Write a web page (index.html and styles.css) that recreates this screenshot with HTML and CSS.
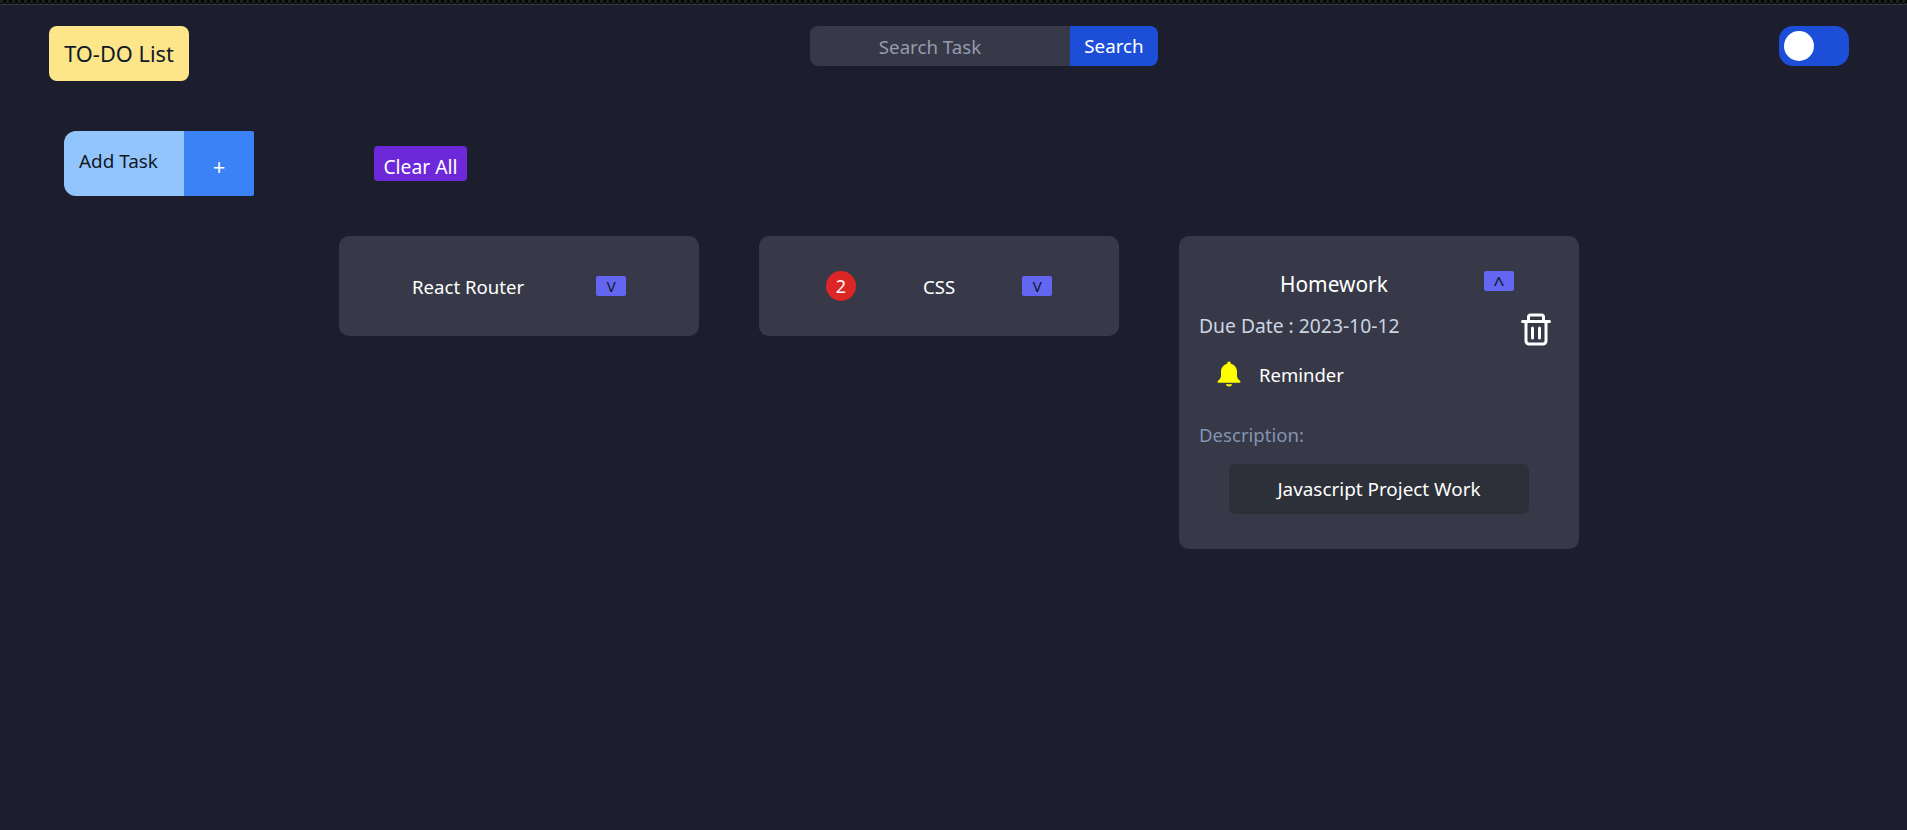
FILE: index.html
```html
<!DOCTYPE html>
<html lang="en">
<head>
    <meta charset="UTF-8">
    <title>TO-DO List</title>
    <link rel="stylesheet" href="styles.css">
</head>
<body>
    <div class="top-strip"></div>

    <header class="navbar">
        <div class="brand">TO-DO List</div>
        <form class="search">
            <input class="search-input" type="text" placeholder="Search Task">
            <button class="search-btn" type="button">Search</button>
        </form>
        <button class="toggle" type="button"><span class="knob"></span></button>
    </header>

    <div class="actions">
        <div class="add-task">
            <span class="add-label">Add Task</span>
            <button class="add-btn" type="button">+</button>
        </div>
        <button class="clear-btn" type="button">Clear All</button>
    </div>

    <main class="tasks">
        <div class="card">
            <div class="card-row row-first">
                <span class="task-name">React Router</span>
                <button class="expand" type="button">V</button>
            </div>
        </div>

        <div class="card">
            <div class="card-row row-second">
                <span class="badge">2</span>
                <span class="task-name">CSS</span>
                <button class="expand" type="button">V</button>
            </div>
        </div>

        <div class="card card-open">
            <div class="open-head">
                <span class="open-title">Homework</span>
                <button class="expand expand-up" type="button">^</button>
            </div>
            <div class="due-row">
                <span class="due">Due Date : 2023-10-12</span>
                <svg class="trash" viewBox="0 0 30 33" fill="none" stroke="currentColor" stroke-width="3" stroke-linecap="round" stroke-linejoin="round">
                    <path d="M1.500 8.500h27"/>
                    <path d="M7.500 8.500V4a2 2 0 0 1 2-2h11a2 2 0 0 1 2 2v4.500"/>
                    <path d="M5 8.500V28a3 3 0 0 0 3 3h14a3 3 0 0 0 3-3V8.500"/>
                    <path d="M11.500 15v10"/>
                    <path d="M18.500 15v10"/>
                </svg>
            </div>
            <div class="reminder">
                <svg class="bell" viewBox="0 0 24 26" fill="currentColor">
                    <path d="M12 .5c-1.100 0-1.800.8-1.800 1.800v.5C6.800 3.600 4 6.600 4 10.500V15c0 1.800-1.300 3.300-3 4.800-.8.6-.5 2 .6 2h20.800c1.100 0 1.400-1.400.6-2-1.700-1.500-3-3-3-4.800v-4.500c0-3.900-2.800-6.900-6.200-7.700v-.5C13.800 1.300 13.100.5 12 .5z"/>
                    <path d="M8.800 23.300h6.400c-.3 1.300-1.600 2.200-3.200 2.200s-2.900-.9-3.200-2.200z"/>
                </svg>
                <span>Reminder</span>
            </div>
            <div class="desc-label">Description:</div>
            <div class="desc-box">Javascript Project Work</div>
        </div>
    </main>
</body>
</html>
```

FILE: styles.css
```css
* {
    box-sizing: border-box;
}
body {
    margin: 0;
    min-height: 830px;
    background-color: #1c1e2e;
    font-family: "Noto Sans", "Open Sans", sans-serif;
    color: white;
    overflow: hidden;
}
button, input {
    font-family: inherit;
    border: none;
}
.top-strip {
    height: 5px;
    background: repeating-conic-gradient(#070707 0 25%, #1e1e1e 0 50%) 0 0 / 6px 6px;
    border-bottom: 1px solid #34353b;
}
.navbar {
    display: flex;
    justify-content: space-between;
    align-items: flex-start;
    padding: 21px 58px 0 49px;
}
.brand {
    width: 140px;
    height: 55px;
    line-height: 55px;
    text-align: center;
    font-size: 21.800px;
    color: #111827;
    background-color: #fde68a;
    border-radius: 8px;
}
.search {
    display: flex;
    height: 40px;
}
.search-input {
    width: 260px;
    padding: 0 36px 0 16px;
    background-color: #383948;
    border-radius: 8px 0 0 8px;
    color: white;
    font-size: 18.700px;
    text-align: center;
    outline: none;
}
.search-input::placeholder {
    color: #939cae;
}
.search-btn {
    width: 88px;
    background-color: #1d4ed8;
    color: white;
    font-size: 18.800px;
    border-radius: 0 8px 8px 0;
}
.toggle {
    width: 70px;
    height: 40px;
    padding: 5px;
    background-color: #1d4ed8;
    border-radius: 14px;
}
.knob {
    display: block;
    width: 30px;
    height: 30px;
    background-color: white;
    border-radius: 50%;
}
.actions {
    display: flex;
    align-items: flex-start;
    gap: 120px;
    padding: 50px 0 0 64px;
}
.add-task {
    display: flex;
    width: 190px;
    height: 65px;
    border-radius: 12px 2px 2px 12px;
    overflow: hidden;
}
.add-label {
    width: 120px;
    padding: 17px 0 0 15px;
    font-size: 18.900px;
    color: #111827;
    background-color: #93c5fd;
}
.add-btn {
    width: 70px;
    padding-top: 6px;
    background-color: #3b82f6;
    color: white;
    font-size: 22px;
}
.clear-btn {
    width: 93px;
    height: 35px;
    margin-top: 15px;
    padding: 6px 0 0;
    background-color: #6d28d9;
    color: white;
    font-size: 19.300px;
    border-radius: 4px;
}
.tasks {
    display: flex;
    align-items: flex-start;
    gap: 60px;
    padding: 40px 0 0 339px;
}
.card {
    width: 360px;
    height: 100px;
    background-color: #383948;
    border-radius: 10px;
}
.card-row {
    display: flex;
    align-items: center;
    height: 100%;
}
.row-first {
    padding-left: 73px;
    gap: 72px;
}
.row-second {
    padding-left: 67px;
    gap: 67px;
}
.task-name {
    font-size: 18.600px;
}
.expand {
    width: 30px;
    height: 20px;
    padding: 0;
    background-color: #6366f1;
    color: #111827;
    font-size: 15px;
    line-height: 20px;
    border-radius: 2px;
}
.expand-up {
    padding-top: 5px;
    font-size: 20px;
    line-height: 15px;
}
.badge {
    width: 30px;
    height: 30px;
    line-height: 30px;
    text-align: center;
    font-size: 18px;
    background-color: #dc2626;
    border-radius: 50%;
}
.card-open {
    width: 400px;
    height: 313px;
    padding: 35px 20px 0;
}
.open-head {
    display: flex;
    align-items: flex-start;
    padding-left: 81px;
    height: 40px;
}
.open-title {
    width: 204px;
    font-size: 20.900px;
    line-height: 24px;
    margin-top: 1px;
}
.due-row {
    display: flex;
    justify-content: space-between;
    align-items: flex-start;
    height: 48px;
    padding-right: 8px;
}
.due {
    margin-top: 3px;
    font-size: 19.300px;
    line-height: 24px;
    color: #cbd5e1;
}
.trash {
    width: 30px;
    height: 33px;
    margin-top: 2px;
}
.reminder {
    display: flex;
    align-items: center;
    gap: 18px;
    padding-left: 18px;
    height: 30px;
    font-size: 18.500px;
}
.bell {
    width: 24px;
    height: 26px;
    color: #ffff00;
}
.desc-label {
    margin-top: 34px;
    font-size: 18.600px;
    line-height: 24px;
    color: #8294b0;
}
.desc-box {
    width: 300px;
    height: 50px;
    margin: 17px 0 0 30px;
    line-height: 50px;
    text-align: center;
    font-size: 18.900px;
    background-color: #2d3039;
    border-radius: 6px;
}
```
